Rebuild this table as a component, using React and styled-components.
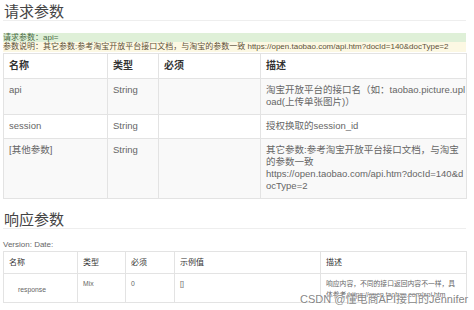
import React from "react";
import styled, { createGlobalStyle } from "styled-components";

const Global = createGlobalStyle`
  html, body { margin: 0; padding: 0; background: #fff; }
  body { font-family: "Liberation Sans", "Noto Sans CJK SC", sans-serif; }
`;

const Page = styled.div`
  position: relative;
  width: 474px;
  height: 310px;
  overflow: hidden;
  padding-left: 3px;
  box-sizing: border-box;
`;

const Content = styled.div`
  width: 463px;
  display: flex;
  flex-direction: column;
`;

const SectionTitle = styled.div`
  font-size: 15px;
  line-height: 16px;
  padding-top: 4px;
  margin-top: ${(p) => p.$mt || 0}px;
  color: #444;
  border-bottom: 1px solid #eee;
  padding-left: 1px;
`;

const Notice = styled.div`
  font-size: 8px;
  line-height: ${(p) => p.$h}px;
  height: ${(p) => p.$h}px;
  white-space: nowrap;
  background: ${(p) => (p.$kind === "success" ? "#dff0d8" : "#fcf8e3")};
  color: ${(p) => (p.$kind === "success" ? "#4a6b45" : "#5e5238")};
  margin-top: ${(p) => p.$mt || 0}px;
`;

const Table = styled.table`
  border-collapse: collapse;
  table-layout: fixed;
  width: 463px;
  margin-top: ${(p) => p.$mt || 0}px;
`;

const Col = styled.col`
  width: ${(p) => p.$w}px;
`;

const Row = styled.tr`
  background: ${(p) => (p.$striped ? "#f9f9f9" : "#fff")};
`;

const Head = styled.th`
  box-sizing: border-box;
  border: 1px solid #e3e3e3;
  text-align: left;
  vertical-align: middle;
  font-weight: ${(p) => (p.$small ? 400 : 700)};
  font-size: ${(p) => (p.$small ? 8 : 10)}px;
  line-height: ${(p) => (p.$small ? 11 : 12)}px;
  padding: ${(p) => (p.$small ? "5px 5px" : "6px 5px")};
  color: #333;
  overflow: hidden;
`;

const Cell = styled.td`
  box-sizing: border-box;
  border: 1px solid #e3e3e3;
  text-align: left;
  vertical-align: top;
  font-size: ${(p) => (p.$small ? 6.8 : 9.5)}px;
  line-height: ${(p) => (p.$small ? 11 : 12)}px;
  padding: ${(p) => (p.$small ? "4px 4px 2px" : "5px 5px 6px")};
  padding-top: ${(p) => (p.$padTop != null ? p.$padTop : p.$small ? 4 : 5)}px;
  padding-left: ${(p) => (p.$indent ? 14 : 5)}px;
  color: #666;
`;

const Line = styled.span`
  display: block;
  white-space: nowrap;
`;

const VersionLine = styled.div`
  font-size: 8px;
  line-height: 10px;
  color: #666;
  margin-top: 11px;
`;

const Watermark = styled.div`
  position: absolute;
  left: 300px;
  top: 293px;
  font-size: 11px;
  line-height: 13px;
  white-space: nowrap;
  color: rgba(110, 110, 110, 0.85);
  text-shadow: 0 0 1px #fff, 0 0 2px #fff;
`;

const Lines = ({ lines }) => lines.map((l, i) => <Line key={i}>{l}</Line>);

const requestRows = [
  {
    name: "api",
    type: "String",
    req: "",
    desc: ["淘宝开放平台的接口名（如：taobao.picture.upl", "oad(上传单张图片)）"],
  },
  { name: "session", type: "String", req: "", desc: ["授权换取的session_id"] },
  {
    name: "[其他参数]",
    type: "String",
    req: "",
    desc: [
      "其它参数:参考淘宝开放平台接口文档，与淘宝",
      "的参数一致",
      "https://open.taobao.com/api.htm?docId=140&d",
      "ocType=2",
    ],
  },
];

export default function App() {
  return (
    <Page>
      <Global />
      <Content>
        <SectionTitle>请求参数</SectionTitle>
        <Notice $kind="success" $h={9} $mt={12}>请求参数：api=</Notice>
        <Notice $kind="warning" $h={10}>
          参数说明：其它参数:参考淘宝开放平台接口文档，与淘宝的参数一致 https://open.taobao.com/api.htm?docId=140&amp;docType=2
        </Notice>
        <Table $mt={1}>
          <colgroup>
            <Col $w={104} />
            <Col $w={51} />
            <Col $w={102} />
            <Col $w={206} />
          </colgroup>
          <thead>
            <Row>
              <Head>名称</Head>
              <Head>类型</Head>
              <Head>必须</Head>
              <Head>描述</Head>
            </Row>
          </thead>
          <tbody>
            {requestRows.map((r, i) => (
              <Row key={r.name} $striped={i % 2 === 0}>
                <Cell>{r.name}</Cell>
                <Cell>{r.type}</Cell>
                <Cell>{r.req}</Cell>
                <Cell>
                  <Lines lines={r.desc} />
                </Cell>
              </Row>
            ))}
          </tbody>
        </Table>

        <SectionTitle $mt={9}>响应参数</SectionTitle>
        <VersionLine>Version: Date:</VersionLine>
        <Table $mt={1}>
          <colgroup>
            <Col $w={74} />
            <Col $w={48} />
            <Col $w={49} />
            <Col $w={146} />
            <Col $w={146} />
          </colgroup>
          <thead>
            <Row>
              <Head $small>名称</Head>
              <Head $small>类型</Head>
              <Head $small>必须</Head>
              <Head $small>示例值</Head>
              <Head $small>描述</Head>
            </Row>
          </thead>
          <tbody>
            <Row>
              <Cell $small $indent $padTop={10}>response</Cell>
              <Cell $small>Mix</Cell>
              <Cell $small>0</Cell>
              <Cell $small>[]</Cell>
              <Cell $small>
                <Lines lines={["响应内容，不同的接口返回内容不一样，具", "体参考 https://open.taobao.com/api.htm"]} />
              </Cell>
            </Row>
          </tbody>
        </Table>
      </Content>
      <Watermark>CSDN @懂电商API接口的Jennifer</Watermark>
    </Page>
  );
}
